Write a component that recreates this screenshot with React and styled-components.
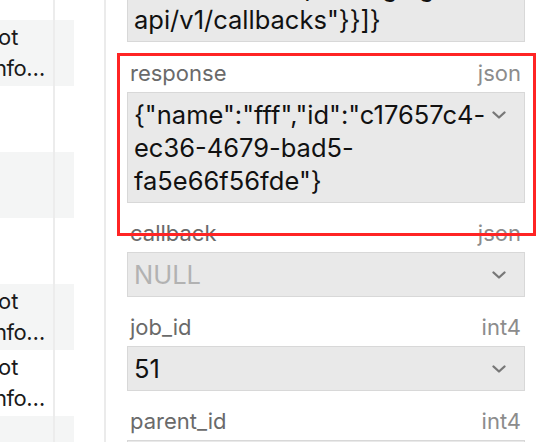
import React from "react";
import styled, { createGlobalStyle } from "styled-components";

const GlobalStyle = createGlobalStyle`
  html, body {
    margin: 0;
    padding: 0;
    background: #ffffff;
    overflow: hidden;
  }
  body {
    font-family: Inter, "Noto Sans", "Liberation Sans", sans-serif;
    color: #1c1c1c;
  }
`;

const Screen = styled.div`
  position: relative;
  display: flex;
  width: 544px;
  height: 442px;
  overflow: hidden;
  background: #fff;
`;

/* ---------- left: scrolled table ---------- */

const TableArea = styled.div`
  width: 104px;
  flex-shrink: 0;
  border-right: 2px solid #ebebeb;
  overflow: hidden;
`;

const Table = styled.div`
  width: 74px;
  margin-top: -46px;
  display: flex;
  flex-direction: column;
`;

const Row = styled.div`
  display: grid;
  grid-template-columns: 55px 19px;
  height: 66px;
  background: ${({ $striped }) => ($striped ? "#f4f5f5" : "#ffffff")};
`;

const Cell = styled.div`
  border-right: 2px solid #ececec;
  overflow: hidden;
  display: flex;
  flex-direction: column;
  justify-content: center;
  font-size: 22px;
  line-height: 31px;
  white-space: nowrap;
  color: #1a1a1a;
`;

const CellLine = styled.span`
  margin-left: ${({ $shift }) => $shift || 0}px;
  letter-spacing: ${({ $tight }) => ($tight ? "-0.5px" : "0")};
`;

const EmptyCell = styled.div``;

/* ---------- right: record editor ---------- */

const Panel = styled.div`
  flex: 1;
  padding: 0 19px 0 21px;
  overflow: hidden;
`;

const Fields = styled.div`
  margin-top: -36px;
  display: flex;
  flex-direction: column;
`;

const Field = styled.div`
  display: flex;
  flex-direction: column;
  margin-top: 17px;
`;

const LabelRow = styled.div`
  display: flex;
  justify-content: space-between;
  align-items: center;
  height: 26px;
  margin-bottom: 6px;
  padding: 0 4px 0 3px;
  font-size: 22px;
`;

const Name = styled.span`
  color: #6a6a6a;
`;

const Type = styled.span`
  color: #8c8c8c;
`;

const Box = styled.div`
  display: flex;
  align-items: flex-start;
  background: #e9e9e9;
  border: 1px solid #d8d8d8;
  padding: 5px 18px 5px 6px;
  margin-bottom: ${({ $gap }) => $gap || 0}px;
  font-size: 25.5px;
  line-height: 33px;
  color: ${({ $null }) => ($null ? "#b2b2b2" : "#111111")};
`;

const Value = styled.div`
  flex: 1;
  min-width: 0;
  overflow-wrap: anywhere;
`;

const Line = styled.div`
  white-space: nowrap;
  overflow: hidden;
`;

const ChevronWrap = styled.div`
  width: 14px;
  height: 33px;
  margin-left: 4px;
  flex-shrink: 0;
  display: flex;
  align-items: center;
`;

const Chevron = () => (
  <ChevronWrap>
    <svg width="14" height="8" viewBox="0 0 14 8">
      <polyline
        points="1.5,1.5 7,6.5 12.5,1.5"
        fill="none"
        stroke="#777777"
        strokeWidth="2.3"
        strokeLinecap="round"
        strokeLinejoin="round"
      />
    </svg>
  </ChevronWrap>
);

// annotation drawn over the screenshot
const Highlight = styled.div`
  position: absolute;
  left: 117px;
  top: 53px;
  width: 419px;
  height: 183px;
  box-sizing: border-box;
  border: 3px solid #ff2424;
  pointer-events: none;
`;

const rows = [
  { striped: false, text: false },
  { striped: true, text: true },
  { striped: false, text: false },
  { striped: true, text: false },
  { striped: false, text: false },
  { striped: true, text: true },
  { striped: false, text: true },
  { striped: true, text: false },
];

const fields = [
  {
    name: "response",
    type: "json",
    value: `{"name":"fff","id":"c17657c4-ec36-4679-bad5-fa5e66f56fde"}`,
  },
  { name: "callback", type: "json", value: "NULL", isNull: true },
  { name: "job_id", type: "int4", value: "51" },
  { name: "parent_id", type: "int4", value: "" },
];

export default function App() {
  return (
    <Screen>
      <GlobalStyle />
      <TableArea>
        <Table>
          {rows.map((r, i) => (
            <Row key={i} $striped={r.striped}>
              {r.text ? (
                <Cell>
                  <CellLine $shift={-2}>ot</CellLine>
                  <CellLine $shift={-6} $tight>
                    nfo…
                  </CellLine>
                </Cell>
              ) : (
                <Cell />
              )}
              <EmptyCell />
            </Row>
          ))}
        </Table>
      </TableArea>

      <Panel>
        <Fields>
          <Box $gap={1}>
            <Value>
              <Line>"to":{"{"}"url":"http://staging/</Line>
              <Line>api/v1/callbacks"{"}}]}"}</Line>
            </Value>
          </Box>
          {fields.map((f) => (
            <Field key={f.name}>
              <LabelRow>
                <Name>{f.name}</Name>
                <Type>{f.type}</Type>
              </LabelRow>
              <Box $null={f.isNull}>
                <Value>{f.value || "\u00a0"}</Value>
                <Chevron />
              </Box>
            </Field>
          ))}
        </Fields>
      </Panel>

      <Highlight />
    </Screen>
  );
}
